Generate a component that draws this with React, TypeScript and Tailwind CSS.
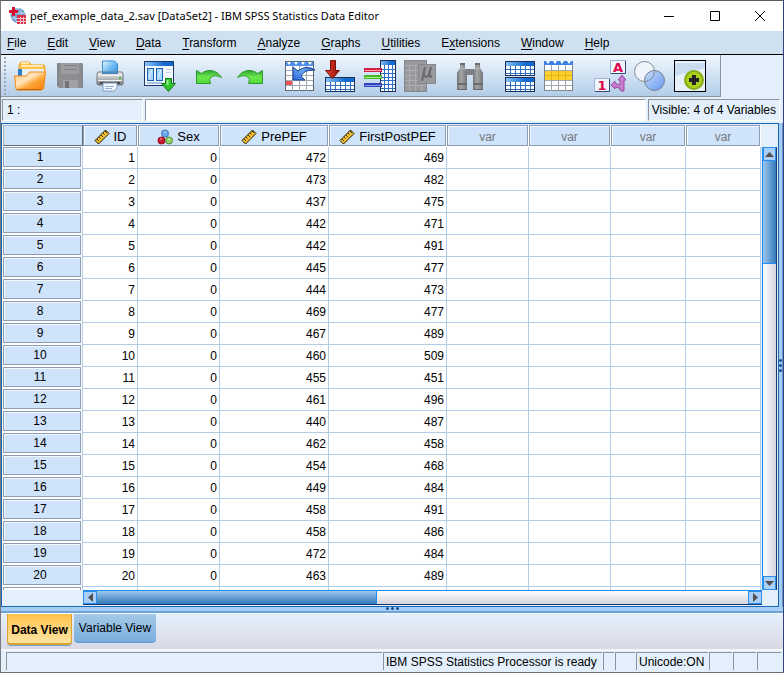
import React from 'react';

const rows = [
  [1, 0, 472, 469],
  [2, 0, 473, 482],
  [3, 0, 437, 475],
  [4, 0, 442, 471],
  [5, 0, 442, 491],
  [6, 0, 445, 477],
  [7, 0, 444, 473],
  [8, 0, 469, 477],
  [9, 0, 467, 489],
  [10, 0, 460, 509],
  [11, 0, 455, 451],
  [12, 0, 461, 496],
  [13, 0, 440, 487],
  [14, 0, 462, 458],
  [15, 0, 454, 468],
  [16, 0, 449, 484],
  [17, 0, 458, 491],
  [18, 0, 458, 486],
  [19, 0, 472, 484],
  [20, 0, 463, 489],
];

const menus = ['File', 'Edit', 'View', 'Data', 'Transform', 'Analyze', 'Graphs', 'Utilities', 'Extensions', 'Window', 'Help'];

// Index of the underlined letter where it is not the first one
const mnemonics: Record<string, number> = { Extensions: 1 };

type GridProps = { x: number; y: number; w: number; h: number; cols: number; rows: number; head?: number; line?: string; fill?: string };

const MiniGrid = ({ x, y, w, h, cols, rows, head = 5, line = '#2f6fc0', fill = '#fff' }: GridProps) => (
  <g>
    <rect x={x} y={y} width={w} height={h} fill={fill} />
    {Array.from({ length: cols - 1 }, (_, i) => {
      const cx = Math.round(x + ((i + 1) * w) / cols) + 0.5;
      return <path key={i} d={`M${cx} ${y + head}V${y + h}`} stroke={line} />;
    })}
    {Array.from({ length: rows - 1 }, (_, i) => {
      const cy = Math.round(y + head + ((i + 1) * (h - head)) / rows) + 0.5;
      return <path key={i} d={`M${x} ${cy}H${x + w}`} stroke={line} />;
    })}
    <rect x={x} y={y} width={w} height={head} fill="url(#blueHead)" />
    <rect x={x + 0.5} y={y + 0.5} width={w - 1} height={h - 1} fill="none" stroke="#1b2f5e" />
  </g>
);

const Gradients = () => (
  <svg width="0" height="0" className="absolute" aria-hidden="true">
    <defs>
      <linearGradient id="blueHead" x1="0" x2="1" y1="0" y2="0">
        <stop offset="0" stopColor="#8cc4fa" />
        <stop offset="0.7" stopColor="#1469cc" />
      </linearGradient>
      <linearGradient id="orange" x1="0" x2="1" y1="0" y2="1">
        <stop offset="0" stopColor="#ffc477" />
        <stop offset="0.4" stopColor="#ffe6be" />
        <stop offset="0.6" stopColor="#ffa73a" />
        <stop offset="1" stopColor="#f37c0c" />
      </linearGradient>
      <linearGradient id="green" x1="0" x2="0" y1="0" y2="1">
        <stop offset="0" stopColor="#2fa636" />
        <stop offset="0.5" stopColor="#6be84c" />
        <stop offset="1" stopColor="#52d83a" />
      </linearGradient>
      <linearGradient id="red" x1="0" x2="1" y1="0" y2="0">
        <stop offset="0" stopColor="#e8432c" />
        <stop offset="1" stopColor="#8e0d08" />
      </linearGradient>
      <linearGradient id="paper" x1="0" x2="1" y1="0" y2="1">
        <stop offset="0" stopColor="#ecf7ff" />
        <stop offset="0.5" stopColor="#6bbcf4" />
        <stop offset="1" stopColor="#2f8ce0" />
      </linearGradient>
      <linearGradient id="metal" x1="0" x2="0" y1="0" y2="1">
        <stop offset="0" stopColor="#f4f4f4" />
        <stop offset="0.5" stopColor="#b8babd" />
        <stop offset="1" stopColor="#77797c" />
      </linearGradient>
      <linearGradient id="blueArrow" x1="0" x2="1" y1="1" y2="0">
        <stop offset="0" stopColor="#2c66d8" />
        <stop offset="0.6" stopColor="#6ba8f4" />
        <stop offset="1" stopColor="#2355b0" />
      </linearGradient>
      <linearGradient id="vennBlue" x1="0" x2="1" y1="0" y2="1">
        <stop offset="0" stopColor="#c8dcfb" />
        <stop offset="1" stopColor="#6698ee" />
      </linearGradient>
      <linearGradient id="barrel" x1="0" x2="1" y1="0" y2="0">
        <stop offset="0" stopColor="#737477" />
        <stop offset="0.4" stopColor="#a5a6a8" />
        <stop offset="1" stopColor="#747578" />
      </linearGradient>
    </defs>
  </svg>
);

const OpenIcon = () => (
  <>
    <path d="M5 11V5l2-3h8l2 3h13l1 3v4z" fill="#ffc04a" stroke="#f09a1a" />
    <path d="M7 3h8M7 6h22" stroke="#ffe9a8" strokeWidth="2" />
    <path d="M4 9h26v7H4z" fill="#e8f2fc" />
    <path d="M4 9h4v9H4z" fill="#2d7cc4" />
    <path d="M0.500 16h12l3-4h16l-2 17-2 1H3l-1-1z" fill="url(#orange)" stroke="#f08a14" />
    <path d="M3 29.500h24" stroke="#c95f05" />
  </>
);

const SaveIcon = () => (
  <>
    <path d="M3 3h25l1 1v24H5l-2-2z" fill="#8b8d90" />
    <rect x="7" y="3" width="18" height="11" fill="#9b9d9f" />
    <path d="M10 5.500h13M10 9.500h13" stroke="#808285" />
    <rect x="9" y="20" width="15" height="8" fill="#a0a2a4" />
    <rect x="11" y="21" width="4" height="7" fill="#717376" />
    <path d="M4 4v21M28 6v21" stroke="#7f8184" />
  </>
);

const PrintIcon = () => (
  <>
    <path d="M8.500 1h12l3 3v12h-15z" fill="url(#paper)" stroke="#3a8ad0" />
    <path d="M4 12h24l1 2v10l-1 1H4l-1-1V14z" fill="url(#metal)" stroke="#77797c" />
    <path d="M8 12h16v2H8z" fill="#4a88c4" />
    <path d="M4 15.500h24M4 20.500h24" stroke="#f1f1f1" />
    <path d="M25 18h2" stroke="#34c228" strokeWidth="2" />
    <path d="M6 23h20" stroke="#45474a" strokeWidth="2" />
    <path d="M9 23h14v5l-3 3H9z" fill="#f4f9ff" stroke="#7b9cc0" />
    <path d="M11 26.500h9M11 28.500h7" stroke="#8fb2dc" />
  </>
);

const RecallIcon = () => (
  <>
    <rect x="0.500" y="1.500" width="29" height="24" fill="#f3f8fe" stroke="#1d3768" />
    <rect x="1" y="2" width="28" height="4" fill="url(#blueHead)" />
    <rect x="3.500" y="8.500" width="6" height="12" fill="#a8d6fb" stroke="#1b63b5" />
    <rect x="12.500" y="8.500" width="6" height="12" fill="#a8d6fb" stroke="#1b63b5" />
    <path d="M5 18l3-8M14 18l3-8" stroke="#e8f6ff" />
    <path d="M3 23h15" stroke="#5a8fce" />
    <path d="M22 9.500h5M22 12.500h5" stroke="#c5d2e2" />
    <path d="M21.500 18.500h6v5h4l-7 8-7-8h4z" fill="#2fc52c" stroke="#137a17" />
    <path d="M23.500 20v5" stroke="#9cf08d" strokeWidth="2" />
  </>
);

const UndoIcon = () => (
  <path d="M2.500 10.500l5 3c6-5 15-4 20 4-6-3-10-2-12 2l1 4h-14z" fill="url(#green)" stroke="#2a9a2c" />
);

const RedoIcon = () => (
  <path d="M28.500 10.500l-5 3c-6-5-15-4-20 4 6-3 10-2 12 2l-1 4h14z" fill="url(#green)" stroke="#2a9a2c" />
);

const GotoCaseIcon = () => (
  <>
    <rect x="1.500" y="1.500" width="28" height="29" fill="#fff" stroke="#5d6674" />
    <path d="M8.500 6v25M15.500 6v25M22.500 6v25M2 10.500h27M2 15.500h27M2 20.500h27M2 25.500h27" stroke="#a3a9b1" />
    <rect x="2" y="2" width="27" height="4" fill="#4c8fe8" />
    <path d="M3 2h4l-2 3zM10 2h4l-2 3zM17 2h4l-2 3zM24 2h4l-2 3z" fill="#fff" />
    <rect x="2" y="21" width="6" height="4" fill="#f0525a" />
    <path d="M31 10c-6-4-12-3-17 1l-5-4v13h12l-4-4c3-5 7-6 14-6z" fill="url(#blueArrow)" stroke="#1c448f" />
  </>
);

const GotoVariableIcon = () => (
  <>
    <MiniGrid x={1} y={17} w={30} h={15} cols={6} rows={3} />
    <path d="M6.500 0.500h5v10h4l-7 8-7-8h5z" fill="url(#red)" stroke="#7d0f0c" />
  </>
);

const VariablesIcon = () => (
  <>
    <MiniGrid x={16} y={0} w={16} h={32} cols={4} rows={7} />
    <path d="M0 10h18" stroke="#d6214a" strokeWidth="4" />
    <path d="M0 17h18" stroke="#47b82b" strokeWidth="4" />
    <path d="M0 25h18" stroke="#3344b8" strokeWidth="4" />
    <path d="M1 10.500h16" stroke="#f7a2a4" />
    <path d="M1 17.500h16" stroke="#a8ed83" />
    <path d="M1 25.500h16" stroke="#8499f3" />
  </>
);

const DescriptivesIcon = () => (
  <>
    <rect x="0" y="0" width="23" height="32" fill="#98999c" />
    <path d="M0 5.500h23M0 10.500h23M0 15.500h23M0 20.500h23M0 25.500h23M5.500 5v26M11.500 5v26M17.500 5v26" stroke="#acaeb0" />
    <rect x="0.500" y="0.500" width="22" height="31" fill="none" stroke="#85878a" />
    <rect x="14.500" y="4.500" width="17" height="19" fill="#98999c" stroke="#85878a" />
    <path d="M21 7l-3 14M20 13c-1 5 4 5 6 0M27 7l-2 8c0 2 1 2 3 1" fill="none" stroke="#66686c" strokeWidth="2" />
  </>
);

const FindIcon = () => (
  <>
    <path d="M6 3h5v5l2 5v17H3V13l3-5z" fill="url(#barrel)" />
    <path d="M21 3h5v5l3 5v17H19V13l2-5z" fill="url(#barrel)" />
    <rect x="12" y="9" width="8" height="6" fill="#7d7f82" />
    <path d="M6 4h5M21 4h5M3 24h10M19 24h10" stroke="#6a6c70" strokeWidth="2" />
    <path d="M6 8.500h5M21 8.500h5" stroke="#b4b6b8" />
    <path d="M3 29.500h10M19 29.500h10" stroke="#66686b" />
  </>
);

const SplitIcon = () => (
  <>
    <MiniGrid x={1} y={1} w={30} h={15} cols={6} rows={3} />
    <MiniGrid x={1} y={17} w={30} h={15} cols={6} rows={3} />
  </>
);

const SelectIcon = () => (
  <>
    <rect x="0.500" y="1.500" width="28" height="29" fill="#fff" stroke="#7d8591" />
    <rect x="1" y="11" width="27" height="9" fill="#fad02e" />
    <path d="M7.500 5v26M14.500 5v26M21.500 5v26M1 10.500h27M1 15.500h27M1 20.500h27M1 25.500h27" stroke="#a2a6ac" />
    <path d="M7.500 11v9M14.500 11v9M21.500 11v9M1 15.500h27" stroke="#e5b10e" />
    <rect x="0" y="1" width="29" height="4" fill="#3f80e2" />
    <path d="M2 1h4l-2 3zM9 1h4l-2 3zM16 1h4l-2 3zM23 1h4l-2 3z" fill="#fff" />
  </>
);

const ValueLabelsIcon = () => (
  <>
    <rect x="16.500" y="0.500" width="15" height="13" fill="#f1f5fc" stroke="#9fb4d8" />
    <text x="24" y="12" fontFamily="DejaVu Sans" fontSize="13" fontWeight="bold" textAnchor="middle" fill="#e0064e">A</text>
    <rect x="0.500" y="18.500" width="15" height="13" fill="#f1f5fc" stroke="#9fb4d8" />
    <path d="M1 31.500h14.500V19M17 13.500h14.500V1" fill="none" stroke="#304a7d" />
    <text x="8" y="30" fontFamily="DejaVu Sans" fontSize="13" fontWeight="bold" textAnchor="middle" fill="#e0064e">1</text>
    <path d="M17 25l4-4v2l5 2v-5h-2l4-5 4 5h-2v11h-3l-2-3-4-1v2z" fill="#c77bcb" stroke="#9a4ca6" />
  </>
);

const VennIcon = () => (
  <>
    <circle cx="10.500" cy="11.500" r="10" fill="#eef4fc" />
    <circle cx="20.500" cy="20.500" r="10" fill="url(#vennBlue)" stroke="#74808e" />
    <circle cx="10.500" cy="11.500" r="10" fill="none" stroke="#84888e" />
  </>
);

const CustomizeIcon = () => (
  <>
    <rect x="0.500" y="0.500" width="31" height="31" fill="#e6f1fc" stroke="#000" />
    <path d="M1 3h30v5L1 16z" fill="#c9dcf0" />
    <circle cx="20" cy="20" r="9" fill="#a9d01c" stroke="#86ab14" strokeWidth="2" />
    <path d="M18 15h4v3h3v4h-3v3h-4v-3h-3v-4h3z" fill="#222" />
  </>
);

const toolGroups = [
  [
    { label: 'Open data document', icon: <OpenIcon /> },
    { label: 'Save this document', icon: <SaveIcon />, disabled: true },
    { label: 'Print', icon: <PrintIcon /> },
  ],
  [{ label: 'Recall recently used dialogs', icon: <RecallIcon /> }],
  [
    { label: 'Undo', icon: <UndoIcon /> },
    { label: 'Redo', icon: <RedoIcon /> },
  ],
  [
    { label: 'Go to case', icon: <GotoCaseIcon /> },
    { label: 'Go to variable', icon: <GotoVariableIcon /> },
    { label: 'Variables', icon: <VariablesIcon /> },
    { label: 'Run descriptive statistics', icon: <DescriptivesIcon />, disabled: true },
  ],
  [{ label: 'Find', icon: <FindIcon />, disabled: true }],
  [
    { label: 'Split file', icon: <SplitIcon /> },
    { label: 'Select cases', icon: <SelectIcon /> },
  ],
  [
    { label: 'Value labels', icon: <ValueLabelsIcon /> },
    { label: 'Use variable sets', icon: <VennIcon /> },
    { label: 'Customize toolbar', icon: <CustomizeIcon /> },
  ],
];

const AppIcon = () => (
  <svg width="18" height="18" viewBox="0 0 18 18">
    <circle cx="9" cy="8.500" r="7.500" fill="#6f9ccb" />
    <path d="M9 1c-5 4-5 11 0 15M9 1c5 4 5 11 0 15M2 6h14M2 11h14" fill="none" stroke="#c3daee" />
    <path d="M4.500 0v9M0 4.500h9" stroke="#d7102f" strokeWidth="3" />
    <rect x="8" y="8" width="9" height="9" fill="#d9324f" />
    <path d="M8 11.500h9M8 14.500h9M11.500 10v7M14.500 10v7" stroke="#f6c8d0" />
  </svg>
);

const RulerIcon = () => (
  <svg width="16" height="16" viewBox="0 0 16 16">
    <path d="M1 11.500L11.500 1l3.500 3.500L4.500 15z" fill="#f5c02c" stroke="#1c1804" />
    <path d="M3 10l2 2M5 8l1.500 1.500M7 6l2 2M9 4l1.500 1.500M11 2l2 2" stroke="#3c2c04" />
  </svg>
);

const NominalIcon = () => (
  <svg width="16" height="16" viewBox="0 0 16 16">
    <circle cx="8" cy="4.500" r="3.500" fill="#68a8ec" stroke="#3c76be" />
    <circle cx="4.500" cy="11.500" r="3.500" fill="#cf1b34" stroke="#98091d" />
    <circle cx="12" cy="11.500" r="3.500" fill="#93cf6a" stroke="#4f8f33" />
    <path d="M7 3h2M3 10h2M11 10h2" stroke="#fff" strokeOpacity="0.7" />
  </svg>
);

const columns = [
  { name: 'ID', icon: <RulerIcon /> },
  { name: 'Sex', icon: <NominalIcon /> },
  { name: 'PrePEF', icon: <RulerIcon /> },
  { name: 'FirstPostPEF', icon: <RulerIcon /> },
];

const TitleBar = () => (
  <div className="flex h-[30px] items-center bg-white pl-2 text-black">
    <AppIcon />
    <h1 className="ml-[3px] flex-1 truncate font-['Noto_Sans','Open_Sans',sans-serif] text-[11px]">
      pef_example_data_2.sav [DataSet2] - IBM SPSS Statistics Data Editor
    </h1>
    <button aria-label="Minimize" className="flex h-full w-[45px] items-center justify-center">
      <svg width="11" height="11" stroke="#000"><path d="M0 5.500h10" /></svg>
    </button>
    <button aria-label="Maximize" className="flex h-full w-[46px] items-center justify-center">
      <svg width="11" height="11" fill="none" stroke="#000"><path d="M.5.500h9v9h-9z" /></svg>
    </button>
    <button aria-label="Close" className="flex h-full w-[45px] items-center justify-center">
      <svg width="11" height="11" stroke="#000"><path d="M0 0l10 10M10 0L0 10" /></svg>
    </button>
  </div>
);

const MenuBar = () => (
  <nav className="flex h-6 items-center gap-[21px] border-b border-black bg-[#cfe0f1] pl-[6px]">
    {menus.map((menu) => {
      const at = mnemonics[menu] ?? 0;
      return (
        <button key={menu} className="leading-4">
          {menu.slice(0, at)}
          <span className="underline underline-offset-2">{menu[at]}</span>
          {menu.slice(at + 1)}
        </button>
      );
    })}
  </nav>
);

const Toolbar = () => (
  <div className="flex h-[42px] w-[720px] items-center gap-[10px] border-r border-b border-[#8d949c] bg-linear-to-b from-[#f0f7fe] to-[#b3cde8] pl-[9px]">
    <div className="-mr-[10px] -ml-[6px] h-[38px] w-[6px] border-l-2 border-dotted border-[#9aa6b4]" />
    {toolGroups.map((group, i) => (
      <div key={i} className="flex">
        {group.map((tool) => (
          <button key={tool.label} aria-label={tool.label} disabled={tool.disabled} className="flex size-10 items-center justify-center">
            <svg width="32" height="32" viewBox="0 0 32 32">{tool.icon}</svg>
          </button>
        ))}
      </div>
    ))}
  </div>
);

const sunken = 'border border-t-[#8d949c] border-l-[#8d949c] border-r-white border-b-white';

const CellEditor = () => (
  <div className="flex h-[26px] items-start gap-[2px] pt-[2px] pl-[1px] pr-[3px]">
    <div className={`${sunken} h-[22px] w-[141px] px-1 leading-[21px]`}>1 :</div>
    <input aria-label="Cell value" className={`${sunken} h-[22px] min-w-0 flex-1 bg-white px-1 outline-none`} />
    <div className={`${sunken} h-[22px] px-[3px] leading-[21px] whitespace-nowrap`}>Visible: 4 of 4 Variables</div>
  </div>
);

const headBox = 'mr-px mb-px flex h-[21px] items-center justify-center border border-[#8d9bb3] bg-[#cfe3fb] pt-[2px] shadow-[inset_1px_1px_0_#f0f7fe]';
const rowBox = 'mr-px mb-[2px] ml-px h-5 border border-[#8d9bb3] bg-[#cfe3fb] pr-1 text-center leading-[18px] shadow-[inset_1px_1px_0_#f0f7fe]';
const cell = 'border-r border-b border-[#b3cde8] p-0 pr-[2px] text-right';

const DataTable = () => (
  <table className="w-full table-fixed border-separate border-spacing-0 bg-white">
    <colgroup>
      <col className="w-[81px]" />
      <col className="w-[55px]" />
      <col className="w-[82px]" />
      <col className="w-[109px]" />
      <col className="w-[118px]" />
      <col className="w-[82px]" />
      <col className="w-[82px]" />
      <col className="w-[75px]" />
      <col />
    </colgroup>
    <thead>
      <tr className="h-[22px]">
        <th className="p-0" aria-label="Case">
          <div className="mb-px ml-px h-[21px] border border-t-[#a9b6c8] border-r-[#5f6c80] border-b-[#5f6c80] border-l-[#a9b6c8] bg-[#cfe3fb]" />
        </th>
        {columns.map((col) => (
          <th key={col.name} className="p-0 text-[13px] font-normal">
            <div className={`${headBox} gap-1`}>
              {col.icon}
              <span>{col.name}</span>
            </div>
          </th>
        ))}
        {[1, 2, 3, 4].map((n) => (
          <th key={n} className="p-0 font-normal text-[#75787c]">
            <div className={headBox}>var</div>
          </th>
        ))}
      </tr>
    </thead>
    <tbody>
      {rows.map((row, i) => (
        <tr key={row[0]} className="h-[22px]">
          <th className="border-r border-[#b3cde8] p-0 font-normal">
            <div className={rowBox}>{i + 1}</div>
          </th>
          {row.map((value, j) => (
            <td key={j} className={cell}>{value}</td>
          ))}
          {[1, 2, 3, 4].map((n) => (
            <td key={n} className={cell} />
          ))}
        </tr>
      ))}
      <tr className="h-[3px]">
        <th className="border-r border-[#b3cde8] p-0">
          <div className="mr-px ml-px h-[3px] border-x border-t border-[#8d9bb3]" />
        </th>
        {[1, 2, 3, 4, 5, 6, 7, 8].map((n) => (
          <td key={n} className="border-r border-[#b3cde8] p-0" />
        ))}
      </tr>
    </tbody>
  </table>
);

const arrowButton = 'flex shrink-0 items-center justify-center border border-[#2f8fe8] bg-[#a9cffb]';

const VerticalScroll = () => (
  <div className="mt-[22px] mr-px ml-px flex w-[15px] flex-col border-r border-l border-r-[#12386e] border-l-[#1e8cf0]">
    <button aria-label="Scroll up" className={`${arrowButton} h-[14px]`}>
      <svg width="9" height="5" fill="#55504c"><path d="M0 5l4.500-5L9 5z" /></svg>
    </button>
    <div className="h-[103px] border-b border-[#1e8cf0] bg-linear-to-r from-[#9cc8ee] to-[#3179ba]" />
    <div className="flex-1 bg-linear-to-r from-white to-[#d4d3de]" />
    <button aria-label="Scroll down" className={`${arrowButton} h-[14px]`}>
      <svg width="9" height="5" fill="#55504c"><path d="M0 0l4.500 5L9 0z" /></svg>
    </button>
  </div>
);

const HorizontalScroll = () => (
  <div className="mr-4 ml-[81px] flex h-[15px] border-t border-b border-t-[#1e8cf0] border-b-[#12386e]">
    <button aria-label="Scroll left" className={`${arrowButton} w-[14px]`}>
      <svg width="5" height="9" fill="#55504c"><path d="M5 0L0 4.500 5 9z" /></svg>
    </button>
    <div className="w-[280px] border-r border-[#1e8cf0] bg-linear-to-b from-[#9cc8ee] to-[#3179ba]" />
    <div className="flex-1 bg-linear-to-b from-white to-[#d4d3de]" />
    <button aria-label="Scroll right" className={`${arrowButton} w-[14px]`}>
      <svg width="5" height="9" fill="#55504c"><path d="M0 0l5 4.500L0 9z" /></svg>
    </button>
  </div>
);

const Tabs = () => (
  <div className="flex h-9 items-start gap-[2px] border-t border-[#f4f9ff] bg-linear-to-b from-[#e4effc] to-[#d9d9e4] pl-[6px]">
    <button className="h-[31px] w-[65px] rounded-b border border-t-0 border-b-2 border-[#d9a52e] bg-linear-to-b from-[#ffc247] to-[#ffe3a2] pt-[2px] font-bold whitespace-nowrap shadow-[0_1px_0_#6ea3d5]">
      Data View
    </button>
    <button className="h-[29px] w-[82px] rounded-b border-b-2 border-[#6ea3d5] bg-linear-to-b from-[#a3c8e8] to-[#7db0de] whitespace-nowrap">
      Variable View
    </button>
  </div>
);

const statusCell = 'h-[18px] border-t border-l border-[#8d949c] pl-[2px] leading-[18px] whitespace-nowrap';

const StatusBar = () => (
  <footer className="flex h-[23px] gap-px border-t-2 border-[#f4f6fa] pt-px pl-[5px] pr-[2px]">
    <div className={`${statusCell} min-w-0 flex-1`} />
    <div className={`${statusCell} w-[219px]`}>IBM SPSS Statistics Processor is ready</div>
    <div className={`${statusCell} w-[11px]`} />
    <div className={`${statusCell} w-5`} />
    <div className={`${statusCell} w-[72px]`}>Unicode:ON</div>
    <div className={`${statusCell} w-[23px]`} />
    <div className={`${statusCell} w-[23px]`} />
    <div className={`${statusCell} w-[24px]`} />
  </footer>
);

const Grip = ({ vertical = false }) => (
  <div className={`flex items-center justify-center gap-[2px] ${vertical ? 'flex-col' : ''}`}>
    {[1, 2, 3].map((n) => (
      <span key={n} className="size-[3px] rounded-full bg-[#1b4c96]" />
    ))}
  </div>
);

const App = () => {
  return (
    <div className="border border-t-[#5c5a5c] border-r-[#33437a] border-b-[#6c6f78] border-l-[#77797d] bg-[#e3effb] font-['Liberation_Sans',Arial,sans-serif] text-[12px] text-black">
      <Gradients />
      <TitleBar />
      <MenuBar />
      <Toolbar />
      <CellEditor />
      <div className="flex">
        <div className="min-w-0 flex-1 border border-[#1767b5] pt-px pb-px">
          <div className="flex">
            <div className="min-w-0 flex-1">
              <DataTable />
            </div>
            <VerticalScroll />
          </div>
          <HorizontalScroll />
        </div>
        <div className="flex w-1 items-center justify-center border-r border-[#5f95cc] bg-[#a5cdf6]">
          <Grip vertical />
        </div>
      </div>
      <div className="h-[6px] border-b-2 border-[#6ea3d5] bg-[#a5cdf6]">
        <Grip />
      </div>
      <Tabs />
      <StatusBar />
    </div>
  );
};

export default App;
